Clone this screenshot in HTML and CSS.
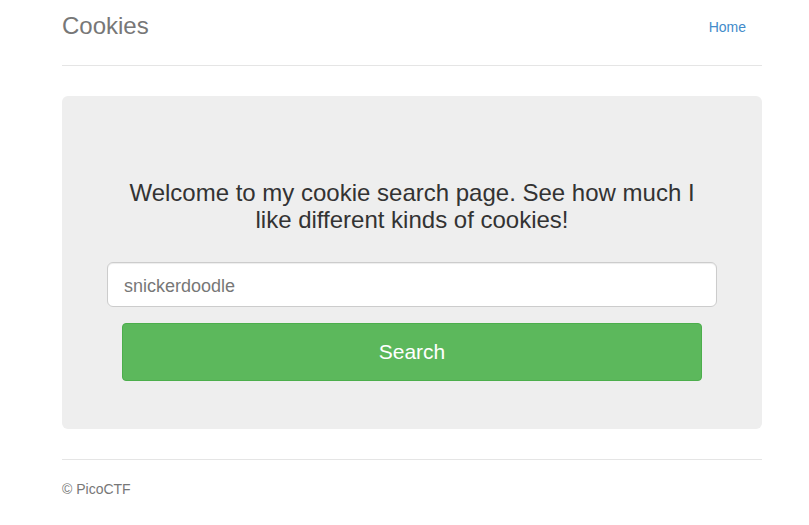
FILE: index.html
```html
<!DOCTYPE html>
<html lang="en">
<head>
    <meta charset="UTF-8">
    <meta name="viewport" content="width=device-width, initial-scale=1.0">
    <title>Cookies</title>
    <link rel="stylesheet" href="styles.css">
</head>
<body>
    <div class="container">
        <div class="header">
            <h3>Cookies</h3>
            <ul class="nav">
                <li><a href="#">Home</a></li>
            </ul>
        </div>

        <div class="jumbotron">
            <p class="lead"></p>
            <h3 class="welcome">Welcome to my cookie search page. See how much I like different kinds of cookies!</h3>
            <form class="search-form">
                <input type="text" class="search-input" placeholder="snickerdoodle">
                <button type="submit" class="btn-search">Search</button>
            </form>
        </div>

        <footer class="footer">
            <p>&copy; PicoCTF</p>
        </footer>
    </div>
</body>
</html>
```

FILE: styles.css
```css
* {
    margin: 0;
    padding: 0;
    box-sizing: border-box;
}

body {
    font-family: 'Liberation Sans', Arial, sans-serif;
    font-size: 14px;
    color: #333;
    background: white;
}

.container {
    width: 700px;
    margin-left: 62px;
    padding-top: 6px;
}

.header {
    display: flex;
    justify-content: space-between;
    align-items: flex-start;
    padding-bottom: 17px;
    border-bottom: 1px solid #e5e5e5;
}

.header h3 {
    font-size: 24px;
    font-weight: 500;
    line-height: 40px;
    color: #777;
}

.nav {
    list-style: none;
}

.nav a {
    display: block;
    padding: 11px 16px 11px 15px;
    color: #428bca;
    text-decoration: none;
    line-height: 20px;
}

.jumbotron {
    margin-top: 30px;
    margin-bottom: 30px;
    background: #eee;
    border-radius: 6px;
    padding: 48px 60px;
    text-align: center;
}

.lead {
    height: 35px;
}

.welcome {
    font-size: 24px;
    font-weight: 500;
    line-height: 27px;
    color: #333;
}

.search-form {
    margin-top: 29px;
    display: flex;
    flex-direction: column;
    align-items: stretch;
    gap: 16px;
}

.search-input {
    margin: 0 -15px;
    height: 45px;
    padding: 12px 16px 8px;
    font-family: inherit;
    font-size: 18px;
    color: #555;
    background: white;
    border: 1px solid #ccc;
    border-radius: 6px;
    box-shadow: inset 0 1px 1px rgba(0,0,0,0.075);
}

.search-input::placeholder {
    color: #777;
}

.btn-search {
    height: 58px;
    font-family: inherit;
    font-size: 21px;
    color: white;
    background: #5cb85c;
    border: 1px solid #4cae4c;
    border-radius: 4px;
    cursor: pointer;
}

.footer {
    padding-top: 19px;
    border-top: 1px solid #e5e5e5;
    color: #777;
    line-height: 20px;
}
```
